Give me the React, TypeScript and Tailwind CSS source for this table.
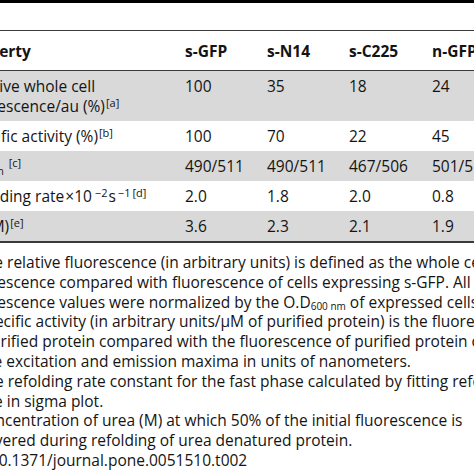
const font = { fontFamily: '"Open Sans", "Liberation Sans", sans-serif' };

type Row = { label: React.ReactNode; values: string[]; shaded: boolean };

const sup = (s: string, extra = '') => <sup className={`text-[11px] ${extra}`}>{s}</sup>;

const rows: Row[] = [
  {
    label: (
      <>
        Relative whole cell
        <br />
        fluorescence/au (%){sup('[a]', 'ml-[1px]')}
      </>
    ),
    values: ['100', '35', '18', '24', '—'],
    shaded: true,
  },
  {
    label: <>Specific activity (%){sup('[b]', 'ml-[1px]')}</>,
    values: ['100', '70', '22', '45', '—'],
    shaded: false,
  },
  {
    label: (
      <>
        λ<sub className="text-[10px] ml-[3px]">ex/em</sub>
        {sup('[c]', 'ml-[5px]')}
      </>
    ),
    values: ['490/511', '490/511', '467/506', '501/512', '—'],
    shaded: true,
  },
  {
    label: (
      <>
        Refolding rate<span className="ml-[1px]">×</span>10{sup('−2', 'ml-[3px] mr-[1px]')}s
        {sup('−1', 'ml-[2px]')}
        {sup('[d]', 'ml-[2px]')}
      </>
    ),
    values: ['2.0', '1.8', '2.0', '0.8', '—'],
    shaded: false,
  },
  {
    label: (
      <>
        C<sub className="text-[10px]">m</sub> (M){sup('[e]', 'ml-[1px]')}
      </>
    ),
    values: ['3.6', '2.3', '2.1', '1.9', '—'],
    shaded: true,
  },
];

const notes: React.ReactNode[] = [
  <>{sup('[a]')}The relative fluorescence (in arbitrary units) is defined as the whole cell</>,
  <>fluorescence compared with fluorescence of cells expressing s-GFP. All the</>,
  <>
    fluorescence values were normalized by the O.D<sub className="text-[10px]">600 nm</sub> of expressed cells.
  </>,
  <>{sup('[b]')}Specific activity (in arbitrary units/μM of purified protein) is the fluorescence</>,
  <>of purified protein compared with the fluorescence of purified protein of s-GFP.</>,
  <>{sup('[c]')}The excitation and emission maxima in units of nanometers.</>,
  <>{sup('[d]')}The refolding rate constant for the fast phase calculated by fitting refolding</>,
  <>curve in sigma plot.</>,
  <>{sup('[e]')}Concentration of urea (M) at which 50% of the initial fluorescence is</>,
  <>recovered during refolding of urea denatured protein.</>,
  <>doi:10.1371/journal.pone.0051510.t002</>,
];

const cols = 'grid grid-cols-[222px_82px_82px_83px_82px_82px]';

export default function App() {
  return (
    <div className="w-[474px] h-[474px] overflow-hidden bg-white text-[#141414]" style={font}>
      <div className="-ml-[37px] w-[700px]">
        <div className="h-[3px] bg-black" />
        <div className="h-[27px]" />
        <div className="border-t-[1.5px] border-b border-[#3a3a3a]">
          <div className={`${cols} h-[39px] items-center pt-[3px] text-[15.5px] font-bold`}>
            <div>Property</div>
            <div>s-GFP</div>
            <div>s-N14</div>
            <div>s-C225</div>
            <div>n-GFP</div>
            <div>n-N14</div>
          </div>
        </div>
        {rows.map((r, i) => (
          <div
            key={i}
            className={`${cols} text-[15.5px] leading-[20px] py-[5px] ${r.shaded ? 'bg-[#d9d9d9]' : 'bg-white'}`}
          >
            <div className="whitespace-nowrap">{r.label}</div>
            {r.values.map((v, j) => (
              <div key={j}>{v}</div>
            ))}
          </div>
        ))}
        <div className="border-t-2 border-[#3a3a3a]" />
        <div className="pt-[10px] text-[15.5px] leading-[19.8px]">
          {notes.map((n, i) => (
            <div key={i} className="whitespace-nowrap">
              {n}
            </div>
          ))}
        </div>
      </div>
    </div>
  );
}
